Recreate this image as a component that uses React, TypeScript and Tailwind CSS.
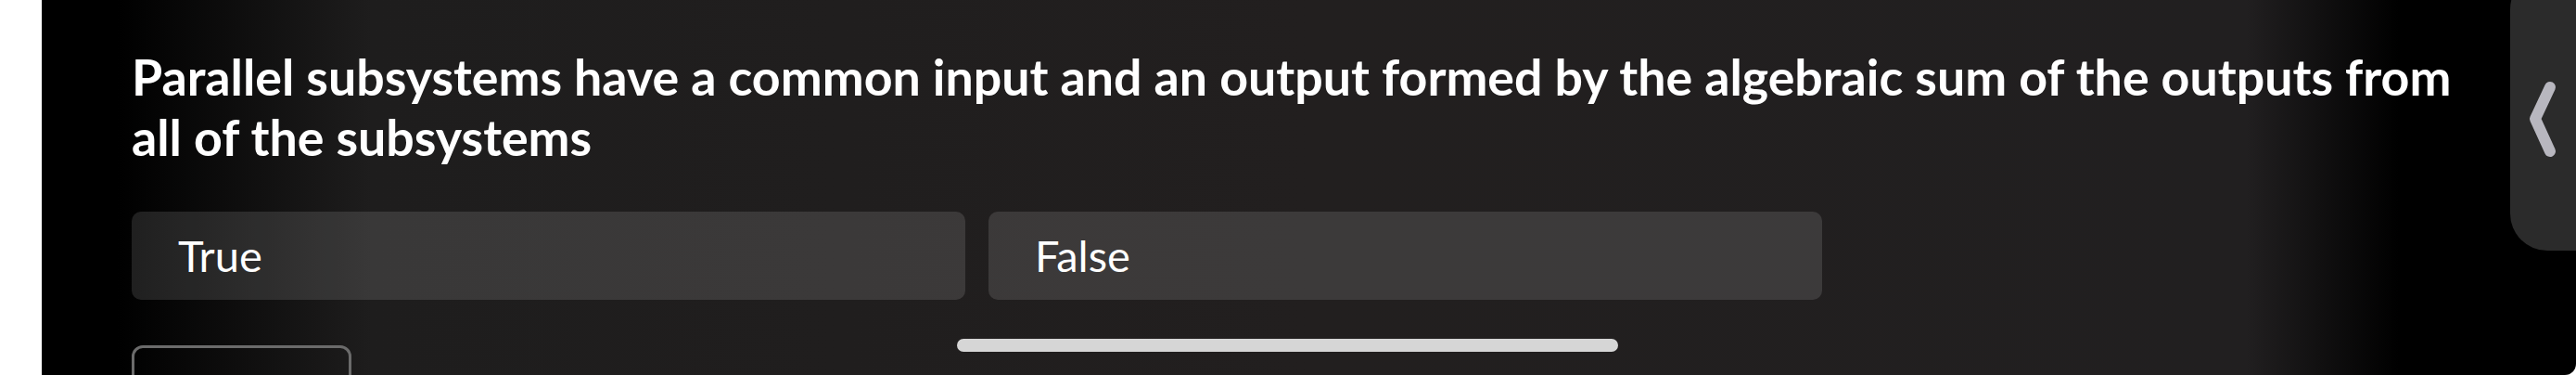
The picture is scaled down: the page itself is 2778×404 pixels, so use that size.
import React from "react";

const options = ["True", "False"];

export default function App() {
  return (
    <div className="flex h-[404px] w-[2778px] overflow-hidden bg-white font-['Lato',sans-serif]">
      {/* white gutter */}
      <div className="w-[45px] shrink-0 bg-white" />

      {/* quiz panel */}
      <div className="relative h-full flex-1 overflow-hidden rounded-br-[12px] bg-[linear-gradient(90deg,#000_0%,#000_3%,#1e1d1d_13%,#221f1f_50%,#211f20_87%,#000_93%,#000_100%)] pl-[97px] pt-[50px]">
        <h1 className="w-[2530px] text-[53.7px] font-bold leading-[65px] text-white">
          Parallel subsystems have a common input and an output formed by the algebraic sum of the outputs from all of the subsystems
        </h1>

        <div className="mt-[48px] flex gap-[25px]">
          {options.map((label) => (
            <button
              key={label}
              className="flex h-[95px] w-[899px] items-center rounded-[10px] bg-white/[0.12] pl-[50px] text-left text-[47px] font-normal text-white"
            >
              {label}
            </button>
          ))}
        </div>

        {/* cut-off outlined button */}
        <div className="mt-[49px] h-[80px] w-[237px] rounded-[12px] border-[3px] border-[#6b6b6b]" />

        {/* home indicator */}
        <div className="absolute left-[987px] top-[365px] h-[14px] w-[713px] rounded-full bg-[#d6d6d6]" />

        {/* side drawer tab */}
        <div className="absolute right-0 top-[-30px] h-[300px] w-[71px] rounded-l-[40px] bg-[#2b2b2b]">
          <svg width="71" height="300" viewBox="0 0 71 300" className="block">
            <path
              d="M43 124 L27 158 L43 193"
              fill="none"
              stroke="#b8b7bf"
              strokeWidth="12"
              strokeLinecap="round"
              strokeLinejoin="round"
            />
          </svg>
        </div>
      </div>
    </div>
  );
}
